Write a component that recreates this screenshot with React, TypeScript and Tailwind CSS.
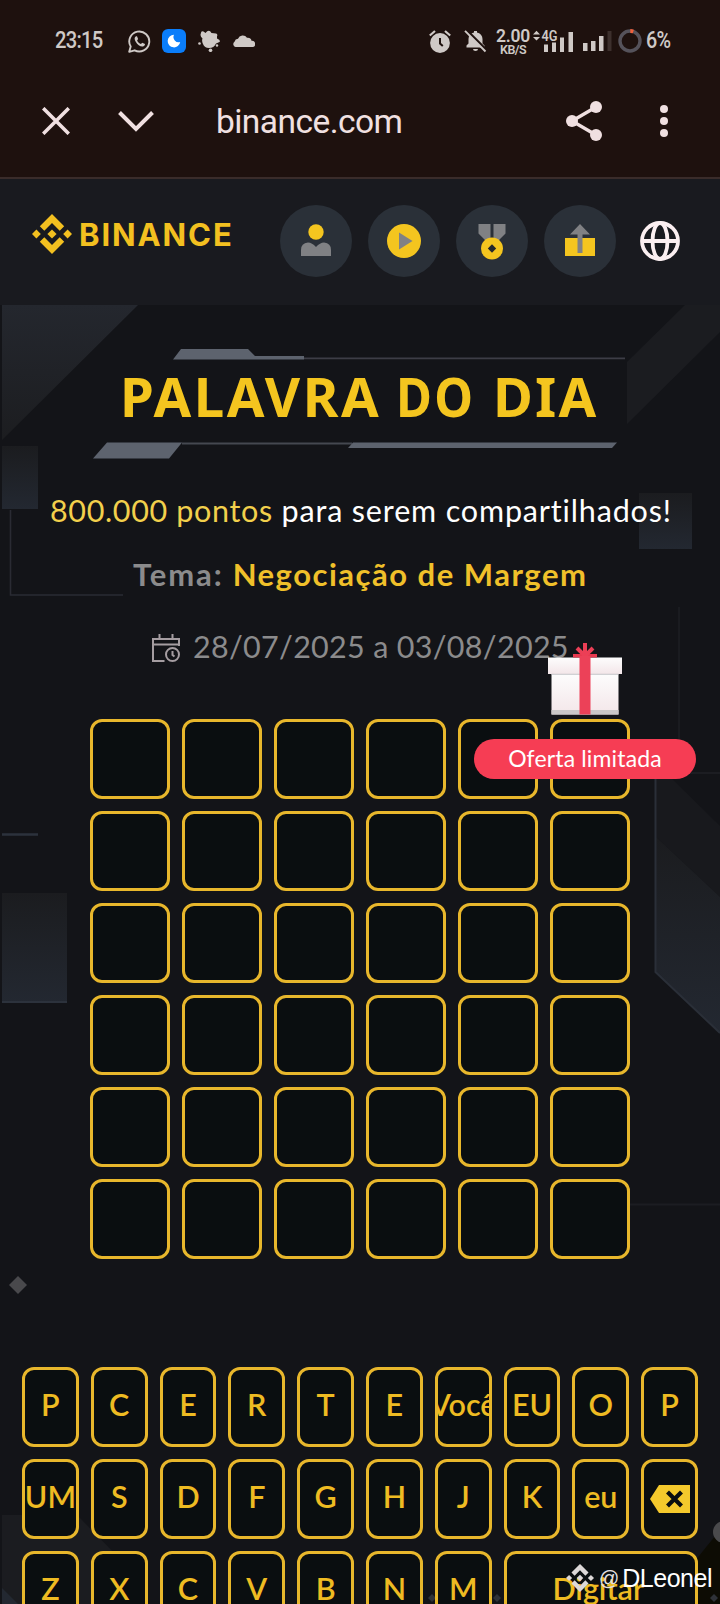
import type { ReactNode } from 'react';

const KEYS = [
  'P', 'C', 'E', 'R', 'T', 'E', 'Você', 'EU', 'O', 'P',
  'UM', 'S', 'D', 'F', 'G', 'H', 'J', 'K', 'eu', 'del',
  'Z', 'X', 'C', 'V', 'B', 'N', 'M', 'Digitar',
];

function BinanceMark({ className }: { className?: string }) {
  return (
    <svg className={className} viewBox="0 0 40 40" fill="currentColor">
      <path d="M20 0 32.2 12.2 27.7 16.7 20 9 12.3 16.7 7.8 12.2Z" />
      <path d="M20 40 32.2 27.8 27.7 23.3 20 31 12.3 23.3 7.8 27.8Z" />
      <path d="M4.4 15.6 8.8 20 4.4 24.4 0 20Z" />
      <path d="M35.6 15.6 40 20 35.6 24.4 31.2 20Z" />
      <path d="M20 15.4 24.6 20 20 24.6 15.4 20Z" />
    </svg>
  );
}

function StatusBar() {
  return (
    <div className="h-[82px] flex items-center pl-[55px] text-[#cfc9c6]">
      <span className="w-[48px] -mt-0.5 text-[24px] leading-none font-medium whitespace-nowrap tracking-[-0.9px] origin-left scale-x-[0.84]">23:15</span>
      <svg className="ml-[25px] w-[23px] h-[23px] shrink-0" viewBox="0 0 23 23" fill="none" stroke="currentColor" strokeWidth="1.9">
        <path d="M1.2 21.8 2.7 16.6A10 10 0 1 1 6.6 20.3Z" strokeLinejoin="round" />
        <path d="M8 6.2c-1.9 1-1.7 3.300-.3 5.500 1.800 3 4.800 5.200 7.300 4.700 1.400-.3 2-1.300 2-2.300l-2.700-1.300-1.400 1.300c-1.600-.6-3-1.900-3.800-3.600l1-1.400-1.100-2.900Z" fill="currentColor" stroke="none" />
      </svg>
      <div className="ml-[11px] w-6 h-6 shrink-0 rounded-[6px] bg-[#0a7dfa] flex items-center justify-center">
        <svg className="w-[14px] h-[14px]" viewBox="0 0 14 14" fill="#fff">
          <path d="M7 .8a5.200 5.200 0 0 0 6.200 7.200A6.300 6.300 0 1 1 7 .8Z" />
        </svg>
      </div>
      <svg className="ml-[12px] w-[23px] h-[22px] shrink-0" viewBox="0 0 23 22" fill="currentColor">
        <path d="M3 3q0-2.500 2.500-1.500L7.500 3Q11-1.500 13.500 3L18 3.500q2 .5 1 3L19 8.500q4 1.500 2.500 3.500L18 13.500Q16 18 11 18 6.500 18 5 14 3.500 11 4.500 8.500 1.500 6 3 3Z" />
        <circle cx="1.500" cy="13.500" r="1.300" />
        <circle cx="12.500" cy="20.300" r="1.800" />
        <circle cx="19" cy="15.500" r="1.200" />
      </svg>
      <svg className="ml-[12px] w-[22px] h-[12px] shrink-0" viewBox="0 0 22 12" fill="currentColor">
        <path d="M2.500 12A3 3 0 0 1 1.500 6.700 4 4 0 0 1 5 3.800 5 5 0 0 1 14 2.800a3.500 3.500 0 0 1 4.500 3A3.200 3.200 0 0 1 20 12Z" />
      </svg>
      <svg className="ml-[174px] w-[22px] h-[23px] shrink-0" viewBox="0 0 22 23">
        <circle cx="11" cy="13" r="9.900" fill="currentColor" />
        <path d="M.8 5.500 6 1M21.200 5.500 16 1" stroke="currentColor" strokeWidth="2.200" />
        <path d="M11 8v5.500l2.800 2.500" stroke="#1e110e" strokeWidth="2" fill="none" />
      </svg>
      <svg className="ml-[13px] w-[23px] h-[23px] shrink-0" viewBox="0 0 23 23">
        <path d="M2.500 17.500v-2l2-2V9a6.500 6.500 0 0 1 5.500-6.500V1h3v1.500A6.500 6.500 0 0 1 18.500 9v4.500l2 2v2Z" fill="currentColor" />
        <path d="M9 19h5a2.500 2 0 0 1-5 0Z" fill="currentColor" />
        <path d="M2.500 0 23 20.500" stroke="#1e110e" strokeWidth="2.500" />
        <path d="M1 .8 21.500 21.500" stroke="currentColor" strokeWidth="1.900" />
      </svg>
      <div className="ml-[9px] w-[34px] pt-0.5 flex flex-col items-center leading-none font-semibold whitespace-nowrap">
        <span className="text-[17.500px] leading-[14px] tracking-[-0.2px]">2.00</span>
        <span className="text-[12.500px] leading-[13px] tracking-[-0.6px]">KB/S</span>
      </div>
      <svg className="ml-[3px] w-[40px] h-[23px] shrink-0 overflow-visible" viewBox="0 0 40 23" fill="currentColor">
        <path d="M0 4.500 3.500 .8 7 4.500ZM0 7h7L3.500 10.500Z" />
        <text x="8.500" y="11" fontSize="14.500" fontWeight="600" textLength="16" lengthAdjust="spacingAndGlyphs">4G</text>
        <path d="M11 14.500h4V22h-4ZM19 12.500h4V22h-4ZM27 7.500h4V22h-4ZM35.500 2h4.500V22h-4.500Z" />
      </svg>
      <svg className="ml-[10px] w-[29px] h-[20px] shrink-0" viewBox="0 0 29 20" fill="currentColor">
        <path d="M0 12h4.500v8H0ZM8 10h4.500v10H8ZM16 5h4.500v15H16Z" />
        <path d="M24.500 0h4v20h-4Z" fill="#3d302d" />
      </svg>
      <svg className="ml-[6px] w-[24px] h-[24px] shrink-0" viewBox="0 0 24 24" fill="none">
        <circle cx="12" cy="12" r="10" stroke="#55525a" strokeWidth="3.400" />
        <path d="M12.300 2a10 10 0 0 1 3 .5" stroke="#f0603c" strokeWidth="3.800" />
      </svg>
      <span className="ml-[4px] text-[23.500px] leading-none font-medium tracking-[-1px] origin-left scale-x-[0.84]">6%</span>
    </div>
  );
}

function BrowserBar() {
  return (
    <div className="h-[95px] flex items-center pl-[42px] pb-[17px] text-[#f0e0e1]">
      <svg className="w-[28px] h-[28px]" viewBox="0 0 28 28" stroke="currentColor" strokeWidth="3.600">
        <path d="M1.200 1.200 26.800 26.800M26.800 1.200 1.200 26.800" />
      </svg>
      <svg className="ml-[48px] w-[36px] h-[21px]" viewBox="0 0 36 21" fill="none" stroke="currentColor" strokeWidth="4">
        <path d="M1.500 1.500 18 18 34.500 1.500" />
      </svg>
      <span className="ml-[62px] w-[189px] mt-[2px] text-[33.500px] leading-none whitespace-nowrap tracking-[-0.550px]">binance.com</span>
      <svg className="ml-[161px] w-[36px] h-[40px]" viewBox="0 0 36 40" fill="currentColor">
        <path d="M30 6 6 20 30 34" fill="none" stroke="currentColor" strokeWidth="3.400" />
        <circle cx="30" cy="6" r="6" />
        <circle cx="6" cy="20" r="6" />
        <circle cx="30" cy="34" r="6" />
      </svg>
      <svg className="ml-[58px] w-[8px] h-[32px]" viewBox="0 0 8 32" fill="currentColor">
        <circle cx="4" cy="4" r="4" />
        <circle cx="4" cy="16" r="4" />
        <circle cx="4" cy="28" r="4" />
      </svg>
    </div>
  );
}

function RoundButton({ children }: { children: ReactNode }) {
  return (
    <button className="w-[72px] h-[72px] rounded-full bg-[#2a3038] flex items-center justify-center">
      <svg className="w-[72px] h-[72px]" viewBox="0 0 72 72">{children}</svg>
    </button>
  );
}

function SiteHeader() {
  return (
    <header className="h-[126px] pb-0.5 bg-[#191a1f] flex items-center pl-8 pr-10">
      <div className="flex items-center w-[200px] pb-[14px] text-[#f3c020]">
        <BinanceMark className="w-10 h-10 shrink-0" />
        <span className="ml-[7px] font-['Inter'] font-bold text-[31px] leading-none tracking-[1.9px]">BINANCE</span>
      </div>
      <nav className="ml-12 flex items-center gap-4">
        <RoundButton>
          <circle cx="36" cy="27" r="7.700" fill="#f4c51f" />
          <path d="M21 51v-6q0-7 7-7.500 4 0 8 4.500 4-4.500 8-4.500 7 .5 7 7.500v6Z" fill="#808184" />
        </RoundButton>
        <RoundButton>
          <circle cx="36" cy="36" r="17" fill="#f4c51f" />
          <path d="M31 27.500 44.500 36 31 44.500Z" fill="#808184" />
        </RoundButton>
        <RoundButton>
          <path d="M22.500 19h12v16.500h-5l-7-7ZM37.500 19h12v9.500l-7 7h-5Z" fill="#808184" />
          <circle cx="36" cy="43.500" r="11" fill="#f4c51f" />
          <path d="m36 39.300 4.200 4.200-4.200 4.200-4.200-4.200Z" fill="#23272c" />
        </RoundButton>
        <RoundButton>
          <path d="M21 33h30v18H21Z" fill="#f4c51f" />
          <path d="M36 19 46 29.500h-7.500V48h-5V29.500H26Z" fill="#808184" />
        </RoundButton>
      </nav>
      <svg className="ml-6 w-10 h-10 shrink-0" viewBox="0 0 40 40" fill="none" stroke="#fbeff1" strokeWidth="3.800">
        <circle cx="20" cy="20" r="18" />
        <ellipse cx="20" cy="20" rx="7.500" ry="18" />
        <path d="M2 20h36" />
      </svg>
    </header>
  );
}

// Angular shapes behind the game, drawn from the top edge of the hero
function Backdrop() {
  return (
    <svg className="absolute inset-0 w-[720px] h-[1299px]" viewBox="0 305 720 1299" fill="none">
      <defs>
        <linearGradient id="corner" x1="0" y1="0" x2="0" y2="1">
          <stop offset="0" stopColor="#24272e" />
          <stop offset="1" stopColor="#1c1d20" />
        </linearGradient>
        <linearGradient id="tile" x1="0" y1="0" x2="0" y2="1">
          <stop offset="0" stopColor="#1b1c1f" />
          <stop offset="1" stopColor="#232831" />
        </linearGradient>
      </defs>
      <path d="M2 305h136L2 440Z" fill="url(#corner)" />
      <path d="M2 446h36v63H2Z" fill="url(#tile)" />
      <path d="M10.500 510v85H123" stroke="#2a2b33" strokeWidth="1.600" />
      <path d="M685 305h35v27l-93 92v-62Z" fill="#1b1c20" />
      <path d="M639 493h53v56h-53Z" fill="url(#tile)" />
      <path d="M679 607v166M656 773h64M630 1204.500h90" stroke="#1c1d22" strokeWidth="1.800" />
      <path d="M656 773h10l54 53v71l-64-60Z" fill="#18191d" />
      <path d="M656 837l64 60v136l-64-61Z" fill="url(#tile)" />
      <path d="M655.500 773v199l64.500 61" stroke="#2a2f38" strokeWidth="2" />
      <path d="M2 834.500h36" stroke="#2c323c" strokeWidth="2.400" />
      <path d="M2 893h65v110H2Z" fill="url(#tile)" />
      <path d="M2 1002h65" stroke="#303640" strokeWidth="1.600" />
      <path d="m18 1276 9 9-9 9-9-9Z" fill="#49494c" />
      <path d="M2 1515h75l43 44v45H2Z" fill="#1b1c20" />
      <path d="M2 1588l16 16H2Z" fill="#232831" />
      <path d="M720 1530v74h-60Z" fill="#0d0c04" />
      <circle cx="724" cy="1532" r="11" fill="#4a4a4c" />
      <path d="m432 1594 4 4-4 4-4-4ZM497 1594l4 4-4 4-4-4ZM714 1594l4 4-4 4-4-4Z" fill="#2f3238" />
    </svg>
  );
}

function TitleBanner() {
  return (
    <div className="w-[532px] ml-[93px]">
      <svg className="w-[532px] h-[12px] block" viewBox="0 0 532 12">
        <path d="M80 10.500 88 0h67l7 7h49v3.500Z" fill="#5d636e" />
        <path d="M211 9.300h323" stroke="#3d3d46" strokeWidth="1.800" />
      </svg>
      <h1 className="h-[81px] leading-[71px] pl-[27px] flex font-['Noto_Sans'] font-bold text-[54.500px] whitespace-nowrap text-[#f4c51f]">
        <span className="w-[276px] tracking-[2.500px]">PALAVRA</span>
        <span className="w-[97px] tracking-[2.600px] origin-left scale-x-[0.9]">DO</span>
        <span className="tracking-[2.200px]">DIA</span>
      </h1>
      <svg className="w-[532px] h-[17px] block" viewBox="0 0 532 17">
        <path d="M89 1.500h170" stroke="#454850" strokeWidth="2" />
        <path d="M14 .5h75L76 16.500H0Z" fill="#5d636e" />
        <path d="M260 .5h264l-5 5.500H255Z" fill="#5d636e" />
      </svg>
    </div>
  );
}

function LimitedOffer() {
  return (
    <div className="absolute top-[338px] left-[474px] w-[222px]">
      <svg className="block ml-[74px] w-[74px] h-[72px]" viewBox="0 0 74 72">
        <defs>
          <linearGradient id="box" x1="0" y1="0" x2="0" y2="1">
            <stop offset="0" stopColor="#fdfdfd" />
            <stop offset="1" stopColor="#f3e6e9" />
          </linearGradient>
        </defs>
        <path d="M3.500 30h67v41.500h-67Z" fill="url(#box)" />
        <path d="M3.500 67h67v4.500h-67Z" fill="#cbc8c8" />
        <path d="M0 14.500h74V31H0Z" fill="url(#box)" />
        <path d="M3.500 31.300h67" stroke="#b9b9bd" strokeWidth=".8" />
        <path d="M25 11h24v3.500H25Z" fill="#e8394f" />
        <path d="M37 0v14M29 5l8 8 8-8" stroke="#ec3f56" strokeWidth="4" fill="none" />
        <path d="M31.500 13h11v58.500h-11Z" fill="#ec4158" />
      </svg>
      <div className="mt-[24px] h-10 pb-px rounded-full bg-[#f63d54] flex items-center justify-center text-white text-[23px] leading-none tracking-[0.15px] whitespace-nowrap">
        Oferta limitada
      </div>
    </div>
  );
}

function KeyCap({ label }: { label: string }) {
  if (label === 'del') {
    return (
      <button className="h-20 rounded-xl border-3 border-[#e8b72c] bg-[#0a0e10] flex items-center justify-center">
        <svg className="w-[40px] h-[28px] shrink-0" viewBox="0 0 40 28">
          <path d="M0 14 9 0h31v28H9Z" fill="#f4c92c" />
          <path d="m17.500 7 14 14M31.500 7l-14 14" stroke="#0a0e10" strokeWidth="4.200" />
        </svg>
      </button>
    );
  }
  return (
    <button
      className={`h-20 min-w-0 pb-1.5 rounded-xl border-3 border-[#e8b72c] bg-[#0a0e10] overflow-hidden flex items-center justify-center text-[30.500px] leading-none font-semibold text-[#eebb22] ${
        label === 'Digitar' ? 'col-span-3 pr-[5px]' : ''
      }`}
    >
      <span className="shrink-0">{label}</span>
    </button>
  );
}

export default function App() {
  return (
    <div className="w-[720px] h-[1604px] relative overflow-hidden bg-[#131418] font-['Lato',sans-serif]">
      <div className="h-[179px] bg-[#1e110e] border-b-2 border-[#3a2c2a] font-['Roboto',sans-serif]">
        <StatusBar />
        <BrowserBar />
      </div>
      <SiteHeader />

      <main className="relative h-[1299px] overflow-hidden">
        <Backdrop />
        <div className="relative pt-[44px]">
          <TitleBanner />

          <p className="mt-[30px] h-[42px] leading-[42px] pl-[50px] text-[30.500px] whitespace-nowrap text-white tracking-[0.85px]">
            <span className="text-[#f2d04c] tracking-[0.65px]">800.000 pontos</span> para serem compartilhados!
          </p>
          <p className="mt-[22px] h-[42px] leading-[42px] pl-[133px] text-[31px] font-bold whitespace-nowrap text-[#f0c02a] tracking-[1.5px]">
            <span className="text-[#8b8b8c] tracking-[1.900px]">Tema:</span> Negociação de Margem
          </p>
          <div className="mt-[32px] h-[42px] flex items-center pl-[152px] text-[#8b8b8c]">
            <svg className="w-[28px] h-[28px] shrink-0" viewBox="0 0 28 28" fill="none" stroke="#a59da1" strokeWidth="2">
              <path d="M12.500 27H1V5h26v7M1 10.500h26M7.500 0v6M20.500 0v6" />
              <circle cx="20.500" cy="20.500" r="6.500" />
              <path d="M20.500 17v4l2 1.500" />
            </svg>
            <span className="-mt-1 ml-[13px] text-[30.500px] leading-none tracking-[0.3px] whitespace-nowrap">28/07/2025 a 03/08/2025</span>
          </div>

          <div className="mt-[50px] mx-auto w-[540px] grid grid-cols-6 gap-3">
            {Array.from({ length: 36 }, (_, i) => (
              <div key={i} className="h-20 rounded-xl border-3 border-[#e8b72c] bg-[#0a0e10]" />
            ))}
          </div>

          <div className="mt-[108px] px-[22px] grid grid-cols-10 gap-3">
            {KEYS.map((label, i) => (
              <KeyCap key={i} label={label} />
            ))}
          </div>
        </div>
        <LimitedOffer />
      </main>

      <div className="absolute left-[566px] top-[1562px] h-8 flex items-center whitespace-nowrap text-white font-['Liberation_Sans']">
        <BinanceMark className="w-[28px] h-[28px] text-[#dcd8d8]" />
        <span className="ml-[5px] text-[20px] leading-none text-[#e4e0e0]">@</span>
        <span className="ml-[3px] text-[25px] leading-none tracking-[-0.5px]">DLeonel</span>
      </div>
    </div>
  );
}
